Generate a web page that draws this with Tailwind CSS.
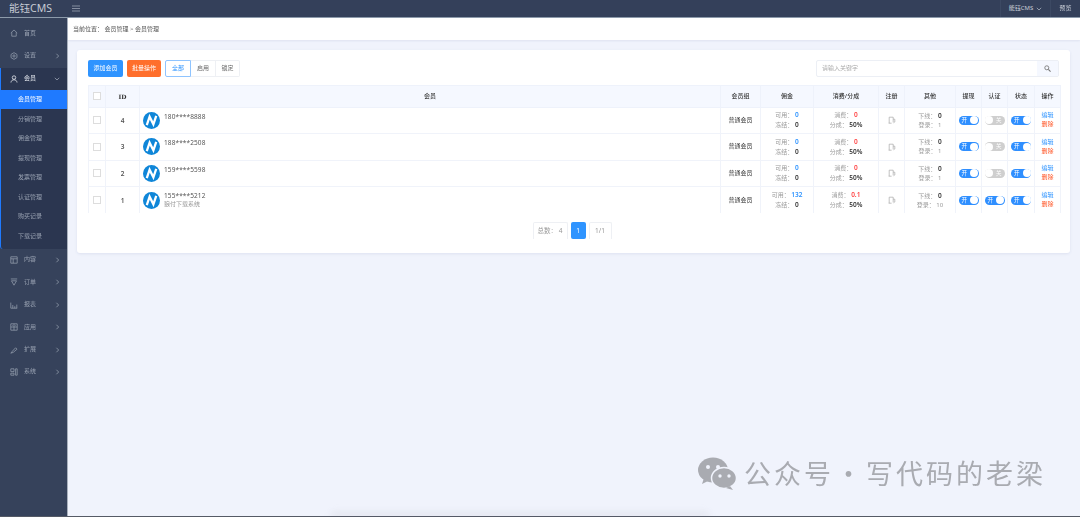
<!DOCTYPE html>
<html lang="zh">
<head>
<meta charset="utf-8">
<script src="https://cdn.jsdelivr.net/npm/@tailwindcss/browser@4"></script>
<title>能钰CMS</title>
</head>
<body class="relative h-[517px] w-[1080px] overflow-hidden bg-[#f0f3fc] font-['Noto_Sans','Noto_Sans_CJK_SC',sans-serif] text-[6px] text-[#555]">
<svg class="hidden">
  <symbol id="av" viewBox="0 0 18 18"><circle cx="9" cy="9" r="9" fill="#0f86d8"/><path d="M4 14 L7 5 L11 13 L14 4" fill="none" stroke="#fff" stroke-width="2.4"/></symbol>
  <symbol id="chev" viewBox="0 0 6 8"><path d="M1.5 1 L4.5 4 L1.5 7" fill="none" stroke="currentColor" stroke-width="1"/></symbol>
  <symbol id="flag" viewBox="0 0 10 10"><path d="M1.5 9V1.5H6.5V8M.8 9H4.5M6.5 4H8.5V7.5L7 8.5" fill="none" stroke="#aaa" stroke-width=".9"/></symbol>
</svg>
<div class="blur-[.45px]">
<header class="flex h-[18px] border-b border-[#8d9bab] bg-[#34405a] text-[#c9ced8]">
  <div class="flex w-[67px] items-center pl-[9px] text-[10.5px] leading-none text-[#c5cad4]">能钰CMS</div>
  <div class="flex items-center pl-[5px]">
    <svg class="h-[7px] w-[8px]" viewBox="0 0 8 7"><path d="M0 1H8M0 3.5H8M0 6H8" stroke="#8f97a8" stroke-width=".9"/></svg>
  </div>
  <div class="ml-auto flex items-center text-[6px]">
    <div class="flex h-full w-[51px] items-center justify-center gap-[3px] border-x border-[#3c4963]">能钰CMS
      <svg class="h-[4px] w-[6px]" viewBox="0 0 6 4"><path d="M.8.8 3 3 5.2.8" fill="none" stroke="#aab1be" stroke-width=".8"/></svg>
    </div>
    <div class="flex h-full w-[29px] items-center justify-center">预览</div>
  </div>
</header>

<div class="flex h-[499px]">
  <aside class="h-full w-[68px] shrink-0 border-r border-[#a9b1bd] bg-[#36425b] pt-[4px] text-[6px] text-[#98a1b1]">
    <a class="flex h-[22.4px] items-center gap-[6px] pl-[10px]"><svg class="h-[8px] w-[8px]" viewBox="0 0 10 10"><path d="M1 5 5 1.2 9 5M2.2 4.2V9H7.8V4.2" fill="none" stroke="#98a1b1" stroke-width=".9"/></svg><span>首页</span></a>
    <a class="flex h-[22.4px] items-center gap-[6px] pl-[10px]"><svg class="h-[8px] w-[8px]" viewBox="0 0 10 10"><path d="M5 .8 8.7 3v4L5 9.2 1.3 7V3Z" fill="none" stroke="#98a1b1" stroke-width=".9"/><circle cx="5" cy="5" r="1.4" fill="none" stroke="#98a1b1" stroke-width=".9"/></svg><span>设置</span><svg class="ml-auto mr-[7px] h-[6px] w-[5px]"><use href="#chev"/></svg></a>
    <div class="mt-[1px] rounded-bl-[3px] border-l border-[#1f7aff] bg-[#2b3650]">
      <a class="flex h-[22px] items-center gap-[6px] pl-[9px] text-[#e6e9ef]"><svg class="h-[8px] w-[8px]" viewBox="0 0 10 10"><circle cx="5" cy="3.2" r="2.2" fill="none" stroke="#e6e9ef"/><path d="M1.2 9.4C1.6 6.8 3 6 5 6s3.4.8 3.8 3.4" fill="none" stroke="#e6e9ef"/></svg><span>会员</span><svg class="ml-auto mr-[7px] h-[4px] w-[6px]" viewBox="0 0 6 4"><path d="M.8.8 3 3 5.2.8" fill="none" stroke="#8d96a8" stroke-width=".9"/></svg></a>
      <a class="flex h-[19.5px] items-center bg-[#1f7aff] pl-[17px] text-white">会员管理</a>
      <a class="flex h-[19.5px] items-center pl-[17px]">分销管理</a>
      <a class="flex h-[19.5px] items-center pl-[17px]">佣金管理</a>
      <a class="flex h-[19.5px] items-center pl-[17px]">提现管理</a>
      <a class="flex h-[19.5px] items-center pl-[17px]">发票管理</a>
      <a class="flex h-[19.5px] items-center pl-[17px]">认证管理</a>
      <a class="flex h-[19.5px] items-center pl-[17px]">购买记录</a>
      <a class="flex h-[19.5px] items-center pl-[17px]">下载记录</a>
      <div class="h-[3px]"></div>
    </div>
    <a class="flex h-[22.4px] items-center gap-[6px] pl-[10px]"><svg class="h-[8px] w-[8px]" viewBox="0 0 10 10"><path d="M1 1H9V9H1ZM1 3.5H9M4 3.5V9" fill="none" stroke="#98a1b1" stroke-width=".9"/></svg><span>内容</span><svg class="ml-auto mr-[7px] h-[6px] w-[5px]"><use href="#chev"/></svg></a>
    <a class="flex h-[22.4px] items-center gap-[6px] pl-[10px]"><svg class="h-[8px] w-[8px]" viewBox="0 0 10 10"><path d="M1 1.2H9M1.8 3.5H8.2L5 9Z" fill="none" stroke="#98a1b1" stroke-width=".9"/></svg><span>订单</span><svg class="ml-auto mr-[7px] h-[6px] w-[5px]"><use href="#chev"/></svg></a>
    <a class="flex h-[22.4px] items-center gap-[6px] pl-[10px]"><svg class="h-[8px] w-[8px]" viewBox="0 0 10 10"><path d="M1 2V9H9M3.5 5V9M6 6.5V9M8.5 4.5V9" fill="none" stroke="#98a1b1" stroke-width=".9"/></svg><span>报表</span><svg class="ml-auto mr-[7px] h-[6px] w-[5px]"><use href="#chev"/></svg></a>
    <a class="flex h-[22.4px] items-center gap-[6px] pl-[10px]"><svg class="h-[8px] w-[8px]" viewBox="0 0 10 10"><path d="M1 1H9V9H1ZM1 5H9M5 1V9M3 3H3.8M6.5 3H7.3" fill="none" stroke="#98a1b1" stroke-width=".9"/></svg><span>应用</span><svg class="ml-auto mr-[7px] h-[6px] w-[5px]"><use href="#chev"/></svg></a>
    <a class="flex h-[22.4px] items-center gap-[6px] pl-[10px]"><svg class="h-[8px] w-[8px]" viewBox="0 0 10 10"><path d="M1 9 3 6.5 7 2.2 8.8 4 4 8Z" fill="none" stroke="#98a1b1" stroke-width=".9"/></svg><span>扩展</span><svg class="ml-auto mr-[7px] h-[6px] w-[5px]"><use href="#chev"/></svg></a>
    <a class="flex h-[22.4px] items-center gap-[6px] pl-[10px]"><svg class="h-[8px] w-[8px]" viewBox="0 0 10 10"><path d="M1 1H5V4.5H1ZM7 1H9V9H7ZM1 6.5H5V9H1Z" fill="none" stroke="#98a1b1" stroke-width=".9"/></svg><span>系统</span><svg class="ml-auto mr-[7px] h-[6px] w-[5px]"><use href="#chev"/></svg></a>
  </aside>

  <main class="min-w-0 flex-1">
    <div class="flex h-[22px] items-center bg-white pl-[5px] text-[6px] text-[#555] shadow-[0_1px_2px_rgba(60,80,140,0.1)]">当前位置：&nbsp;会员管理&nbsp;&gt;&nbsp;会员管理</div>
    <section class="ml-[9px] mr-[10px] mt-[10px] h-[203px] rounded-[3px] bg-white px-[11px] pt-[10px] shadow-[0_1px_3px_rgba(60,80,140,0.1)]">
      <div class="flex h-[25px] items-start">
        <button class="h-[17px] w-[35px] rounded-[2px] bg-[#2f94ff] text-[6px] text-white">添加会员</button>
        <button class="ml-[4px] h-[17px] w-[34px] rounded-[2px] bg-[#ff6f2c] text-[6px] text-white">批量操作</button>
        <div class="ml-[4px] flex h-[17px] text-[6px]">
          <span class="flex w-[26px] items-center justify-center rounded-l-[2px] border border-[#8fc4ff] text-[#2f94ff]">全部</span>
          <span class="flex w-[25px] items-center justify-center border-y border-r border-[#eef0f4] text-[#666]">启用</span>
          <span class="flex w-[24px] items-center justify-center rounded-r-[2px] border-y border-r border-[#eef0f4] text-[#666]">锁定</span>
        </div>
        <div class="ml-auto flex h-[17px] w-[243px] rounded-[2px] border border-[#eceff5]">
          <span class="flex flex-1 items-center pl-[5px] text-[6px] text-[#aaa]">请输入关键字</span>
          <span class="flex w-[21px] items-center justify-center bg-[#f5f8ff]"><svg class="h-[7px] w-[7px]" viewBox="0 0 8 8"><circle cx="3.2" cy="3.2" r="2.3" fill="none" stroke="#777" stroke-width="1"/><path d="M5 5 7.5 7.5" stroke="#777" stroke-width="1.3"/></svg></span>
        </div>
      </div>

      <table class="w-[972px] table-fixed border-collapse text-center text-[6px] leading-[9px]">
        <colgroup><col class="w-[17px]"><col class="w-[34px]"><col class="w-[581px]"><col class="w-[40px]"><col class="w-[53px]"><col class="w-[65px]"><col class="w-[26px]"><col class="w-[51px]"><col class="w-[26px]"><col class="w-[26px]"><col class="w-[27px]"><col class="w-[26px]"></colgroup>
        <thead class="bg-[#f5f8ff] font-medium text-[#333]">
          <tr class="h-[21.5px] [&>th]:border [&>th]:border-[#eef2fb] [&>th]:font-medium">
            <th><span class="mx-auto block h-[8px] w-[8px] border border-[#ddd] bg-white"></span></th>
            <th class="font-['DejaVu_Serif',serif] !font-bold">ID</th><th>会员</th><th>会员组</th><th>佣金</th><th>消费/分成</th><th>注册</th><th>其他</th><th>提现</th><th>认证</th><th>状态</th><th>操作</th>
          </tr>
        </thead>
        <tbody>
          <tr class="h-[26.5px] [&>td]:border [&>td]:border-[#f0f3fa]">
            <td><span class="mx-auto block h-[8px] w-[8px] border border-[#ddd]"></span></td><td class="text-[6.5px] font-semibold">4</td>
            <td><div class="flex items-center pl-[3px] text-left"><svg class="h-[17px] w-[17px]"><use href="#av"/></svg><div class="ml-[4px] self-start text-[6.5px] tracking-[.1px] text-[#555]">180****8888</div></div></td>
            <td class="text-[#333]">普通会员</td>
            <td class="text-[#999]">可用： <b class="text-[6.5px] font-semibold text-[#2f94ff]">0</b><br>冻结： <b class="text-[6.5px] font-semibold text-[#333]">0</b></td>
            <td class="text-[#999]">消费： <b class="text-[6.5px] font-semibold text-[#f44]">0</b><br>分成： <b class="text-[6.5px] font-semibold text-[#333]">50%</b></td>
            <td><svg class="mx-auto h-[8px] w-[8px]"><use href="#flag"/></svg></td>
            <td class="text-[#999]">下线： <b class="text-[6.5px] font-semibold text-[#333]">0</b><br>登录： 1</td>
            <td><div class="mx-auto flex h-[9px] w-[20px] items-center justify-between rounded-full bg-[#2f8fff] pl-[3px] pr-[.5px] text-[5.5px] text-white">开<i class="h-[8px] w-[8px] rounded-full bg-white"></i></div></td>
            <td><div class="mx-auto flex h-[9px] w-[20px] items-center justify-between rounded-full bg-[#cfcfcf] pl-[.5px] pr-[3px] text-[5.5px] text-white"><i class="h-[8px] w-[8px] rounded-full bg-white"></i>关</div></td>
            <td><div class="mx-auto flex h-[9px] w-[20px] items-center justify-between rounded-full bg-[#2f8fff] pl-[3px] pr-[.5px] text-[5.5px] text-white">开<i class="h-[8px] w-[8px] rounded-full bg-white"></i></div></td>
            <td><span class="text-[#2f94ff]">编辑</span><br><span class="text-[#ff5a2c]">删除</span></td>
          </tr>
          <tr class="h-[26.5px] [&>td]:border [&>td]:border-[#f0f3fa]">
            <td><span class="mx-auto block h-[8px] w-[8px] border border-[#ddd]"></span></td><td class="text-[6.5px] font-semibold">3</td>
            <td><div class="flex items-center pl-[3px] text-left"><svg class="h-[17px] w-[17px]"><use href="#av"/></svg><div class="ml-[4px] self-start text-[6.5px] tracking-[.1px] text-[#555]">188****2508</div></div></td>
            <td class="text-[#333]">普通会员</td>
            <td class="text-[#999]">可用： <b class="text-[6.5px] font-semibold text-[#2f94ff]">0</b><br>冻结： <b class="text-[6.5px] font-semibold text-[#333]">0</b></td>
            <td class="text-[#999]">消费： <b class="text-[6.5px] font-semibold text-[#f44]">0</b><br>分成： <b class="text-[6.5px] font-semibold text-[#333]">50%</b></td>
            <td><svg class="mx-auto h-[8px] w-[8px]"><use href="#flag"/></svg></td>
            <td class="text-[#999]">下线： <b class="text-[6.5px] font-semibold text-[#333]">0</b><br>登录： 1</td>
            <td><div class="mx-auto flex h-[9px] w-[20px] items-center justify-between rounded-full bg-[#2f8fff] pl-[3px] pr-[.5px] text-[5.5px] text-white">开<i class="h-[8px] w-[8px] rounded-full bg-white"></i></div></td>
            <td><div class="mx-auto flex h-[9px] w-[20px] items-center justify-between rounded-full bg-[#cfcfcf] pl-[.5px] pr-[3px] text-[5.5px] text-white"><i class="h-[8px] w-[8px] rounded-full bg-white"></i>关</div></td>
            <td><div class="mx-auto flex h-[9px] w-[20px] items-center justify-between rounded-full bg-[#2f8fff] pl-[3px] pr-[.5px] text-[5.5px] text-white">开<i class="h-[8px] w-[8px] rounded-full bg-white"></i></div></td>
            <td><span class="text-[#2f94ff]">编辑</span><br><span class="text-[#ff5a2c]">删除</span></td>
          </tr>
          <tr class="h-[26.5px] [&>td]:border [&>td]:border-[#f0f3fa]">
            <td><span class="mx-auto block h-[8px] w-[8px] border border-[#ddd]"></span></td><td class="text-[6.5px] font-semibold">2</td>
            <td><div class="flex items-center pl-[3px] text-left"><svg class="h-[17px] w-[17px]"><use href="#av"/></svg><div class="ml-[4px] self-start text-[6.5px] tracking-[.1px] text-[#555]">159****5598</div></div></td>
            <td class="text-[#333]">普通会员</td>
            <td class="text-[#999]">可用： <b class="text-[6.5px] font-semibold text-[#2f94ff]">0</b><br>冻结： <b class="text-[6.5px] font-semibold text-[#333]">0</b></td>
            <td class="text-[#999]">消费： <b class="text-[6.5px] font-semibold text-[#f44]">0</b><br>分成： <b class="text-[6.5px] font-semibold text-[#333]">50%</b></td>
            <td><svg class="mx-auto h-[8px] w-[8px]"><use href="#flag"/></svg></td>
            <td class="text-[#999]">下线： <b class="text-[6.5px] font-semibold text-[#333]">0</b><br>登录： 1</td>
            <td><div class="mx-auto flex h-[9px] w-[20px] items-center justify-between rounded-full bg-[#2f8fff] pl-[3px] pr-[.5px] text-[5.5px] text-white">开<i class="h-[8px] w-[8px] rounded-full bg-white"></i></div></td>
            <td><div class="mx-auto flex h-[9px] w-[20px] items-center justify-between rounded-full bg-[#cfcfcf] pl-[.5px] pr-[3px] text-[5.5px] text-white"><i class="h-[8px] w-[8px] rounded-full bg-white"></i>关</div></td>
            <td><div class="mx-auto flex h-[9px] w-[20px] items-center justify-between rounded-full bg-[#2f8fff] pl-[3px] pr-[.5px] text-[5.5px] text-white">开<i class="h-[8px] w-[8px] rounded-full bg-white"></i></div></td>
            <td><span class="text-[#2f94ff]">编辑</span><br><span class="text-[#ff5a2c]">删除</span></td>
          </tr>
          <tr class="h-[26.5px] [&>td]:border-x [&>td]:border-[#f0f3fa]">
            <td><span class="mx-auto block h-[8px] w-[8px] border border-[#ddd]"></span></td><td class="text-[6.5px] font-semibold">1</td>
            <td><div class="flex items-center pl-[3px] text-left"><svg class="h-[17px] w-[17px]"><use href="#av"/></svg><div class="ml-[4px] text-[6.5px] tracking-[.1px] text-[#555]">155****5212<div class="text-[6px] tracking-normal text-[#999]">狼付下载系统</div></div></div></td>
            <td class="text-[#333]">普通会员</td>
            <td class="text-[#999]">可用： <b class="text-[6.5px] font-semibold text-[#2f94ff]">132</b><br>冻结： <b class="text-[6.5px] font-semibold text-[#333]">0</b></td>
            <td class="text-[#999]">消费： <b class="text-[6.5px] font-semibold text-[#f44]">0.1</b><br>分成： <b class="text-[6.5px] font-semibold text-[#333]">50%</b></td>
            <td><svg class="mx-auto h-[8px] w-[8px]"><use href="#flag"/></svg></td>
            <td class="text-[#999]">下线： <b class="text-[6.5px] font-semibold text-[#333]">0</b><br>登录： 10</td>
            <td><div class="mx-auto flex h-[9px] w-[20px] items-center justify-between rounded-full bg-[#2f8fff] pl-[3px] pr-[.5px] text-[5.5px] text-white">开<i class="h-[8px] w-[8px] rounded-full bg-white"></i></div></td>
            <td><div class="mx-auto flex h-[9px] w-[20px] items-center justify-between rounded-full bg-[#2f8fff] pl-[3px] pr-[.5px] text-[5.5px] text-white">开<i class="h-[8px] w-[8px] rounded-full bg-white"></i></div></td>
            <td><div class="mx-auto flex h-[9px] w-[20px] items-center justify-between rounded-full bg-[#2f8fff] pl-[3px] pr-[.5px] text-[5.5px] text-white">开<i class="h-[8px] w-[8px] rounded-full bg-white"></i></div></td>
            <td><span class="text-[#2f94ff]">编辑</span><br><span class="text-[#ff5a2c]">删除</span></td>
          </tr>
        </tbody>
      </table>

      <nav class="mt-[9px] flex h-[17px] items-stretch justify-center gap-[3px] pr-[3px] text-[6.5px] text-[#999]">
        <span class="flex w-[35px] items-center justify-center rounded-t-[2px] border-x border-t border-[#eef0f4]">总数：&nbsp;4</span>
        <span class="flex w-[15px] items-center justify-center rounded-[2px] bg-[#2f94ff] text-white">1</span>
        <span class="flex w-[23px] items-center justify-center rounded-t-[2px] border-x border-t border-[#eef0f4]">1/1</span>
      </nav>
    </section>
  </main>
</div>
</div>

<div class="absolute left-[697px] top-[456px] flex items-center font-['Noto_Sans_CJK_SC',sans-serif] text-[27px] leading-[34px] tracking-[3px] text-[#a9abb1]">
  <svg class="mr-[7px] h-[33px] w-[40px]" viewBox="0 0 40 33"><ellipse cx="16" cy="13" rx="15" ry="12.5" fill="#a9abb1"/><path d="M7 21 5 27 13 23Z" fill="#a9abb1"/><ellipse cx="27" cy="21" rx="12.5" ry="10.5" fill="#a9abb1" stroke="#f0f3fc" stroke-width="1.5"/><path d="M33 29 36 33 29 31Z" fill="#a9abb1"/><circle cx="11" cy="10" r="2" fill="#f0f3fc"/><circle cx="21" cy="10" r="2" fill="#f0f3fc"/><circle cx="23" cy="19" r="1.7" fill="#f0f3fc"/><circle cx="32" cy="19" r="1.7" fill="#f0f3fc"/></svg>
  <span>公众号</span><span class="ml-[1px] mr-[1px]">·</span><span>写代码的老梁</span>
</div>
<div class="absolute bottom-0 left-[330px] h-[5px] w-[380px] rounded-t-full bg-[#d9dbe2]/60 blur-[3px]"></div>
<div class="absolute inset-x-0 bottom-0 h-px bg-[#555a66]"></div>
</body>
</html>
